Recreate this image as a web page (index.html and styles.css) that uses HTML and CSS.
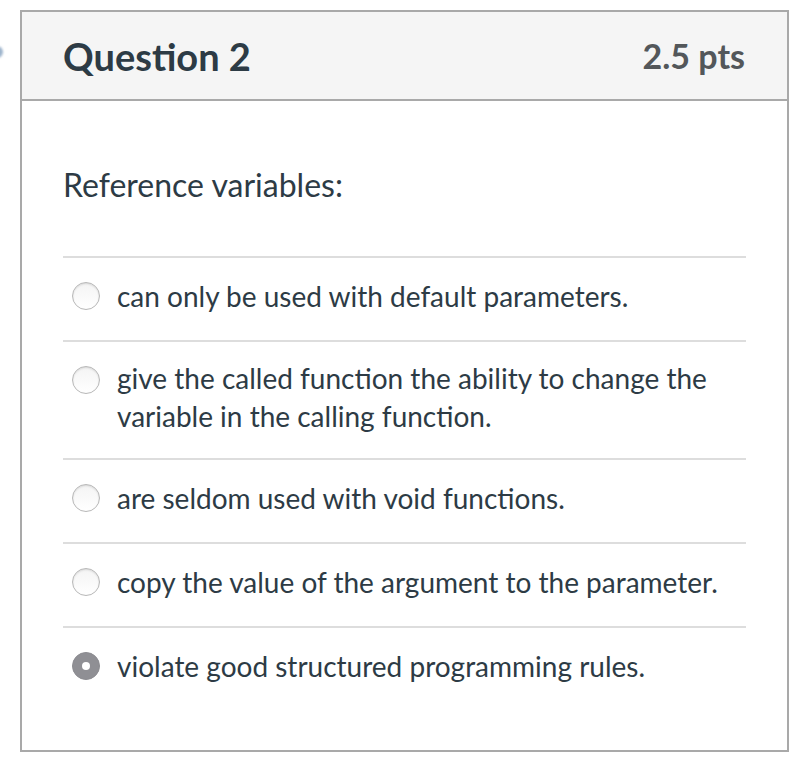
FILE: index.html
```html
<!DOCTYPE html>
<html>
<head>
<meta charset="utf-8">
<link rel="stylesheet" href="styles.css">
</head>
<body>
<span class="edge-flag"></span>
<div class="question">
  <div class="q-header">
    <h2 class="q-title">Question 2</h2>
    <div class="q-points">2.5 pts</div>
  </div>
  <div class="q-body">
    <div class="q-text">Reference variables:</div>
    <div class="answers">
      <div class="answer">
        <span class="radio"></span>
        <span class="answer-text">can only be used with default parameters.</span>
      </div>
      <div class="answer">
        <span class="radio"></span>
        <span class="answer-text">give the called function the ability to change the variable in the calling function.</span>
      </div>
      <div class="answer">
        <span class="radio"></span>
        <span class="answer-text">are seldom used with void functions.</span>
      </div>
      <div class="answer">
        <span class="radio"></span>
        <span class="answer-text">copy the value of the argument to the parameter.</span>
      </div>
      <div class="answer">
        <span class="radio checked"></span>
        <span class="answer-text">violate good structured programming rules.</span>
      </div>
    </div>
  </div>
</div>
</body>
</html>
```

FILE: styles.css
```css
html, body {
  margin: 0;
  padding: 0;
  background: #ffffff;
}

body {
  font-family: Lato, "Open Sans", sans-serif;
  color: #2d3b45;
  padding: 10px 0 0 20px;
  position: relative;
}

.edge-flag {
  position: absolute;
  left: -9px;
  top: 46px;
  width: 12px;
  height: 12px;
  border-radius: 50%;
  background: #9db4cc;
  filter: blur(1px);
}

.question {
  width: 769px;
  box-sizing: border-box;
  border: 2px solid #a9a9a9;
}

.q-header {
  height: 89px;
  box-sizing: border-box;
  background: #f5f5f5;
  border-bottom: 2px solid #a9a9a9;
  display: flex;
  align-items: center;
  justify-content: space-between;
  padding: 0 42px 0 41px;
}

.q-title {
  margin: 0;
  font-size: 38px;
  font-weight: 700;
  color: #2d3b45;
  line-height: 44px;
}

.q-points {
  font-size: 34px;
  font-weight: 700;
  color: #53575a;
  line-height: 44px;
}

.q-body {
  padding: 64px 41px 40px 41px;
}

.q-text {
  font-size: 32px;
  line-height: 40px;
  margin-bottom: 51px;
}

.answer {
  border-top: 2px solid #dddddd;
  padding: 17px 0 23px 9px;
  display: flex;
  align-items: flex-start;
  gap: 17px;
}

.answer-text {
  font-size: 28px;
  line-height: 38px;
  min-height: 42px;
  display: flex;
  align-items: center;
}

.radio {
  flex: none;
  width: 28px;
  height: 28px;
  margin-top: 7px;
  box-sizing: border-box;
  border-radius: 50%;
  border: 1px solid #b8b8b8;
  background: linear-gradient(#f4f4f4, #ffffff);
  box-shadow: inset 0 1px 2px rgba(0,0,0,0.12);
  display: flex;
  align-items: center;
  justify-content: center;
}

.radio.checked {
  border-color: #8c8c91;
  background: #8f8f94;
  box-shadow: none;
}

.radio.checked::after {
  content: "";
  width: 8px;
  height: 8px;
  border-radius: 50%;
  background: #ffffff;
}
```
